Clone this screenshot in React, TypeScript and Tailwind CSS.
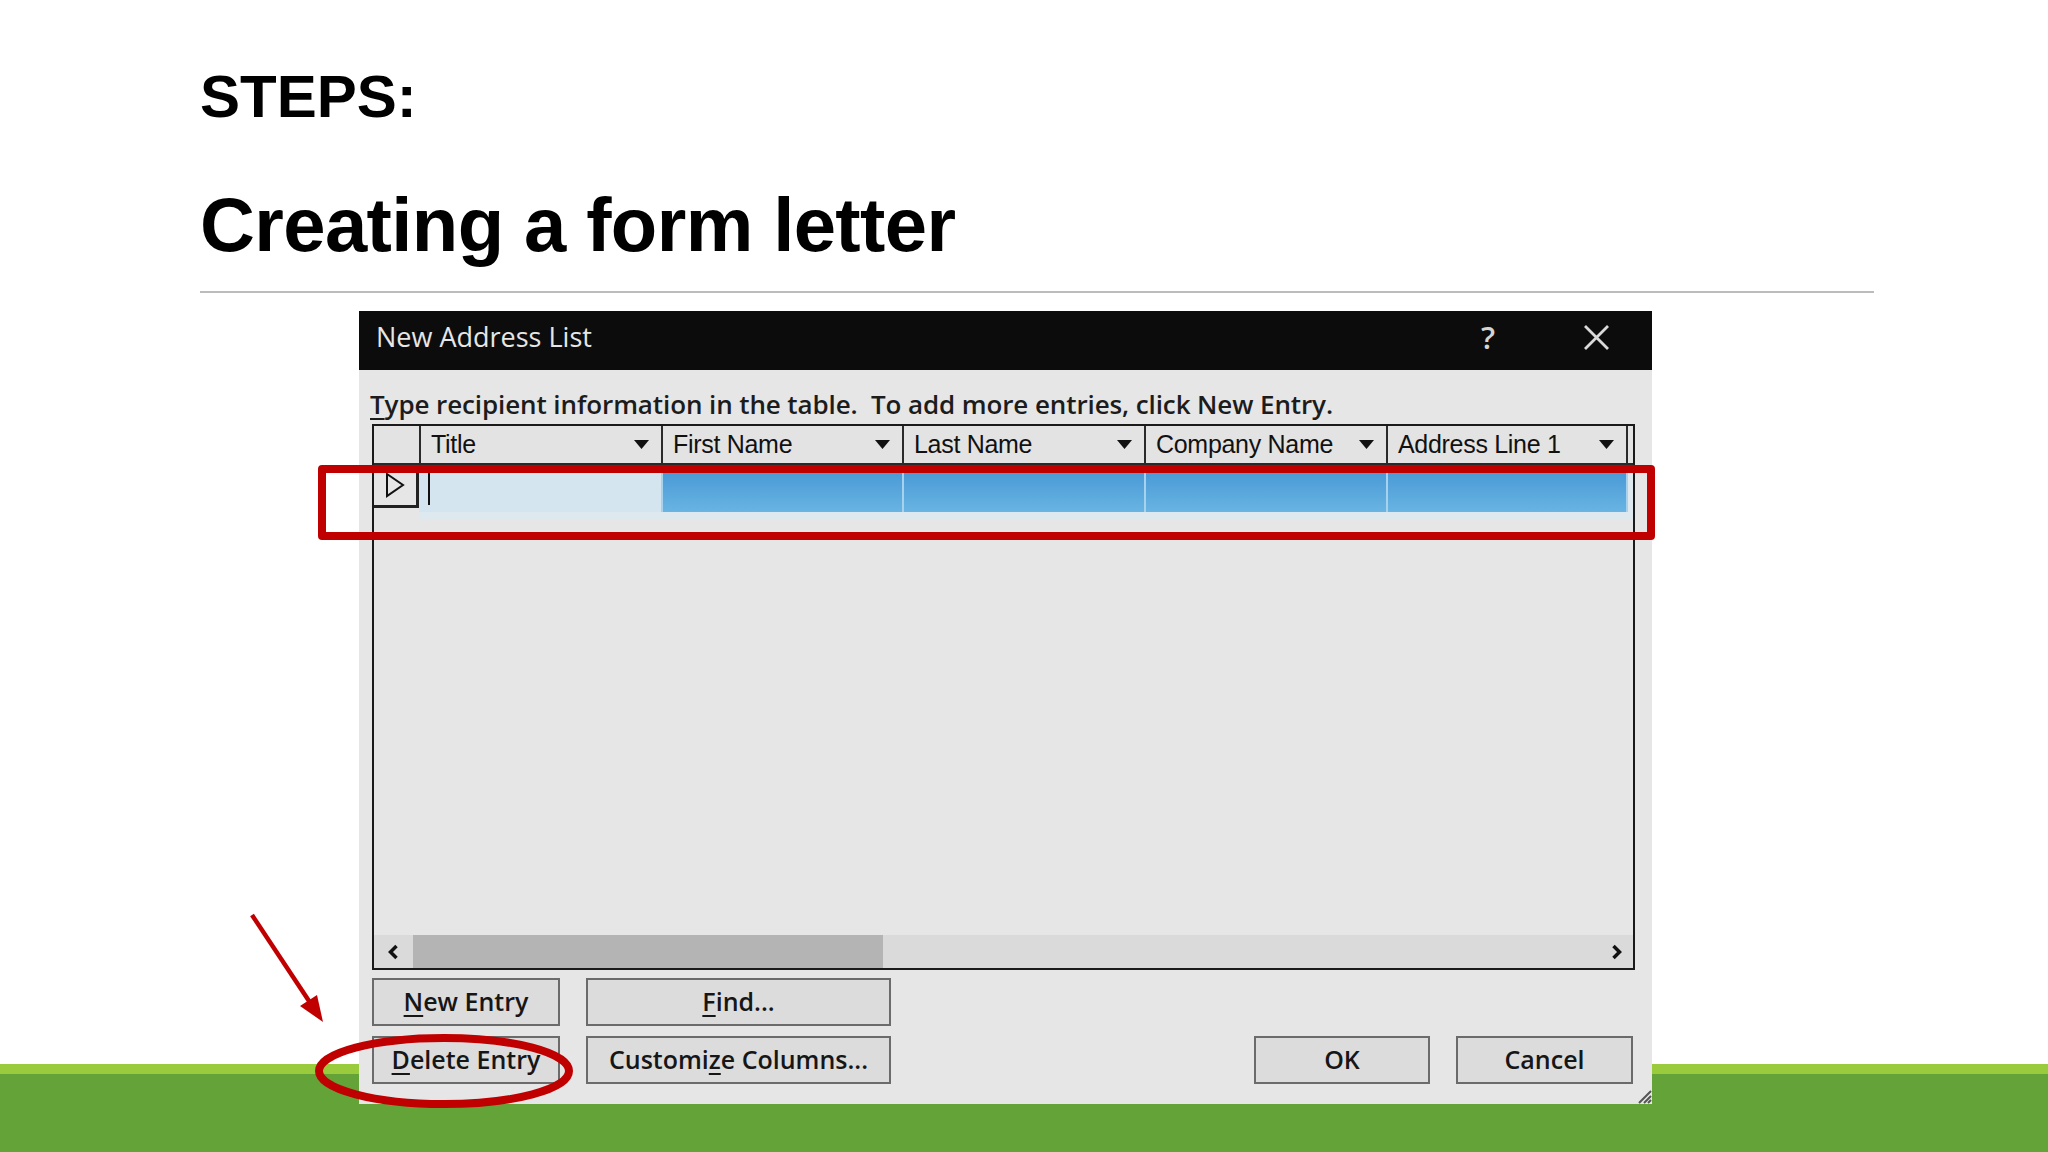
import React from "react";

const headerCols = [
  { label: "Title", width: "w-[242px]" },
  { label: "First Name", width: "w-[241px]" },
  { label: "Last Name", width: "w-[242px]" },
  { label: "Company Name", width: "w-[242px]" },
  { label: "Address Line 1", width: "w-[240px]" },
];

const blueCols = ["w-[241px]", "w-[242px]", "w-[242px]", "w-[240px]"];

function DropArrow() {
  return (
    <svg width="15" height="9" viewBox="0 0 15 9" className="shrink-0">
      <polygon points="0,0 15,0 7.5,9" fill="#111" />
    </svg>
  );
}

function Chevron({ dir }: { dir: "left" | "right" }) {
  return (
    <svg width="12" height="16" viewBox="0 0 12 16" className="shrink-0">
      <path
        d={dir === "left" ? "M9.5 2 L3.5 8 L9.5 14" : "M2.5 2 L8.5 8 L2.5 14"}
        fill="none"
        stroke="#111"
        strokeWidth="3.5"
      />
    </svg>
  );
}

function DialogButton({
  className,
  children,
}: {
  className?: string;
  children: React.ReactNode;
}) {
  return (
    <div
      className={`flex h-[48px] items-center justify-center border-2 border-[#6b6b6b] bg-[#dcdcdc] text-[25px] font-semibold text-[#161616] ${className ?? ""}`}
    >
      {children}
    </div>
  );
}

export default function App() {
  return (
    <div className="relative h-[1152px] w-[2048px] overflow-hidden bg-white font-['Liberation_Sans',Arial,sans-serif]">
      {/* green footer band */}
      <div className="absolute bottom-0 left-0 flex h-[88px] w-full flex-col">
        <div className="h-[10px] bg-[#9acb3c]" />
        <div className="flex-1 bg-[#63a337]" />
      </div>

      {/* slide heading */}
      <div className="relative pl-[200px] pt-[67px]">
        <h2 className="text-[60px] font-bold leading-none text-black">STEPS:</h2>
        <h1 className="mt-[60px] text-[76px] font-bold leading-none tracking-[-0.6px] text-black">
          Creating a form letter
        </h1>
        <div className="mt-[28px] h-[2px] w-[1674px] bg-[#bcbcbc]" />
      </div>

      {/* dialog */}
      <div className="relative z-10 ml-[359px] mt-[18px] flex h-[793px] w-[1293px] flex-col bg-[#e6e6e6] font-['Open_Sans','Noto_Sans',sans-serif]">
        <div className="flex h-[59px] items-center justify-between bg-[#0c0c0c] pb-[6px] pl-[17px] pr-[42px]">
          <span className="text-[27px] text-[#e6e6e6]">New Address List</span>
          <div className="flex items-center gap-[88px]">
            <span className="text-[31px] font-semibold text-[#d4d4d4]">?</span>
            <svg width="27" height="25" viewBox="0 0 27 25">
              <path d="M2 1 L25 24 M25 1 L2 24" stroke="#dadada" strokeWidth="2.8" />
            </svg>
          </div>
        </div>

        <div className="flex flex-1 flex-col pl-[11px] pr-[17px] pt-[22px]">
          <p className="text-[26px] font-semibold leading-[24px] tracking-[-0.1px] text-[#1c1c1c]">
            <span className="underline underline-offset-[4px]">T</span>ype recipient information in the table.&nbsp; To add more entries, click New Entry.
          </p>

          {/* grid */}
          <div className="ml-[2px] mt-[8px] flex h-[546px] flex-col border-2 border-[#1a1a1a] bg-[#e6e6e6]">
            <div className="flex h-[39px] border-b-2 border-[#2a2a2a] bg-[#e3e3e3] font-['Liberation_Sans',Arial,sans-serif]">
              <div className="w-[45px]" />
              {headerCols.map((c) => (
                <div
                  key={c.label}
                  className={`flex items-center justify-between border-l-2 border-[#2a2a2a] pl-[10px] pr-[12px] ${c.width}`}
                >
                  <span className="text-[25px] tracking-[-0.3px] text-[#111]">{c.label}</span>
                  <DropArrow />
                </div>
              ))}
              <div className="flex-1 border-l-2 border-[#2a2a2a]" />
            </div>

            <div className="flex h-[47px]">
              <div className="flex h-[43px] w-[45px] items-center justify-center border-b-[3px] border-r-[3px] border-[#222]">
                <svg width="22" height="28" viewBox="0 0 22 28">
                  <polygon points="3,3 19,14 3,25" fill="none" stroke="#111" strokeWidth="2" />
                </svg>
              </div>
              <div className="flex w-[242px] items-center bg-[#d4e5ef] pl-[9px]">
                <div className="h-[32px] w-[2px] bg-[#111]" />
              </div>
              {blueCols.map((w, i) => (
                <div
                  key={i}
                  className={`border-l-2 border-[#a6d2ee] bg-linear-to-b from-[#4595d3] to-[#68b4e3] ${w}`}
                />
              ))}
              <div className="flex-1 border-l-2 border-[#a6d2ee] bg-[#dde8ef]" />
            </div>
            <div className="ml-[45px] h-[8px] bg-[#dde8ef]" />

            <div className="flex-1" />

            <div className="flex h-[33px] items-center bg-[#dadada]">
              <div className="ml-[13px]">
                <Chevron dir="left" />
              </div>
              <div className="ml-[14px] h-full w-[470px] bg-[#b4b4b4]" />
              <div className="flex-1" />
              <div className="mr-[10px]">
                <Chevron dir="right" />
              </div>
            </div>
          </div>

          {/* buttons */}
          <div className="ml-[2px] mt-[8px] flex items-end justify-between pr-[2px]">
            <div className="grid grid-cols-[188px_305px] gap-x-[26px] gap-y-[10px]">
              <DialogButton>
                <span>
                  <span className="underline underline-offset-[4px]">N</span>ew Entry
                </span>
              </DialogButton>
              <DialogButton>
                <span>
                  <span className="underline underline-offset-[4px]">F</span>ind...
                </span>
              </DialogButton>
              <DialogButton>
                <span>
                  <span className="underline underline-offset-[4px]">D</span>elete Entry
                </span>
              </DialogButton>
              <DialogButton>
                <span>
                  Customi<span className="underline underline-offset-[4px]">z</span>e Columns...
                </span>
              </DialogButton>
            </div>
            <div className="flex gap-[26px]">
              <DialogButton className="w-[176px]">OK</DialogButton>
              <DialogButton className="w-[177px]">Cancel</DialogButton>
            </div>
          </div>
        </div>

        <svg width="16" height="16" viewBox="0 0 16 16" className="absolute bottom-0 right-0">
          <path d="M15 3 L3 15 M15 8 L8 15 M15 12 L12 15" stroke="#555" strokeWidth="2" />
        </svg>
      </div>

      {/* annotations */}
      <div className="absolute left-[318px] top-[465px] z-20 h-[75px] w-[1337px] rounded-[4px] border-[8px] border-[#c00000]" />
      <svg
        width="262"
        height="80"
        viewBox="0 0 262 80"
        className="absolute left-[313px] top-[1031px] z-20"
      >
        <ellipse cx="131" cy="40" rx="125" ry="33" fill="none" stroke="#c00000" strokeWidth="8" />
      </svg>
      <svg
        width="100"
        height="125"
        viewBox="0 0 100 125"
        className="absolute left-[240px] top-[905px] z-20"
      >
        <line x1="12" y1="10" x2="69" y2="96" stroke="#c00000" strokeWidth="4.5" />
        <polygon points="83,117 60,101 77,90" fill="#c00000" />
      </svg>
    </div>
  );
}
